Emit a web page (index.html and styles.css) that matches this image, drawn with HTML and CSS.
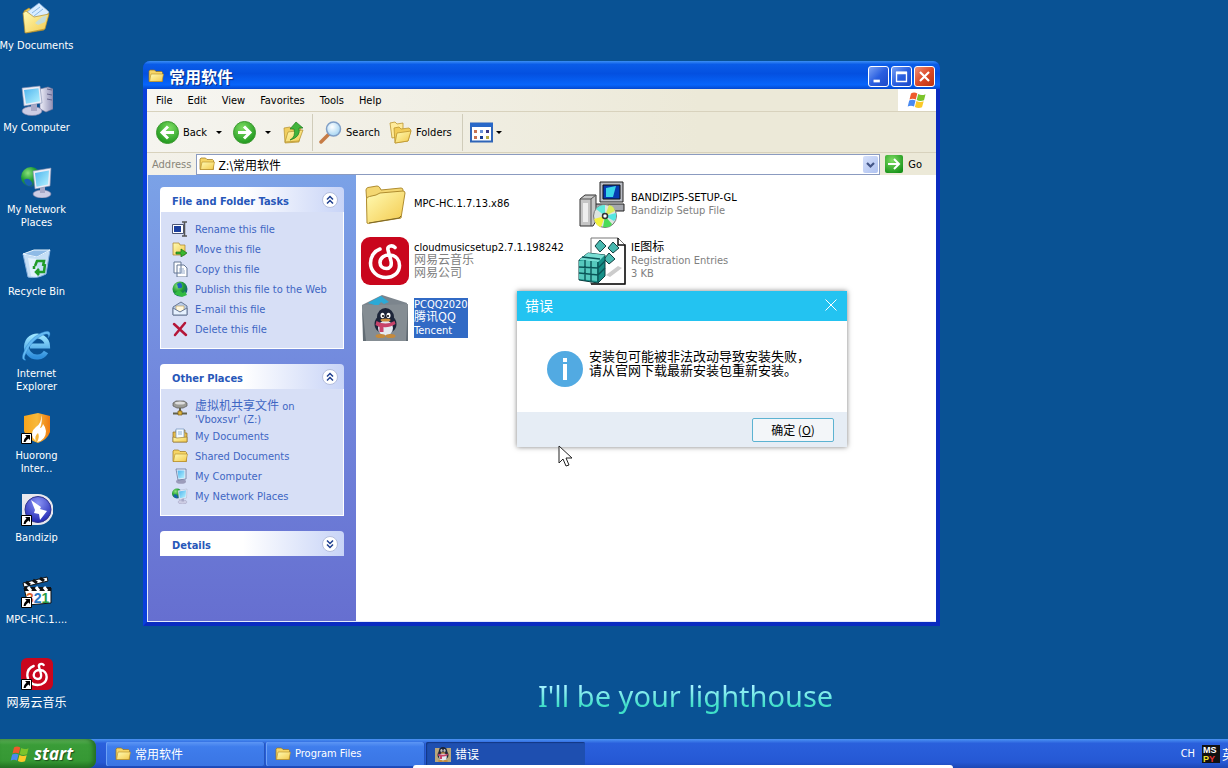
FILE: index.html
```html
<!DOCTYPE html>
<html lang="en">
<head>
    <meta charset="UTF-8">
    <meta name="viewport" content="width=device-width, initial-scale=1.0">
    <title>Desktop</title>
    <link rel="stylesheet" href="styles.css">
</head>
<body>
<!-- shared icons -->
<svg class="sprite" aria-hidden="true">
    <defs>
        <linearGradient id="g-folder" x1="0" y1="0" x2="1" y2="1"><stop offset="0" stop-color="#fffbb4"/><stop offset="1" stop-color="#f3c94c"/></linearGradient>
        <linearGradient id="g-screen" x1="0" y1="0" x2="1" y2="1"><stop offset="0" stop-color="#4fb4ee"/><stop offset="1" stop-color="#b5f3ff"/></linearGradient>
        <linearGradient id="g-case" x1="0" y1="0" x2="1" y2="0"><stop offset="0" stop-color="#f0f0fa"/><stop offset="1" stop-color="#8f8fb4"/></linearGradient>
        <radialGradient id="g-green" cx=".4" cy=".3" r=".8"><stop offset="0" stop-color="#7ddc62"/><stop offset="1" stop-color="#149016"/></radialGradient>
        <radialGradient id="g-globe" cx=".35" cy=".3" r=".8"><stop offset="0" stop-color="#8be27b"/><stop offset=".5" stop-color="#1f9c33"/><stop offset="1" stop-color="#14479c"/></radialGradient>
        <radialGradient id="g-lens" cx=".4" cy=".35" r=".7"><stop offset="0" stop-color="#fff"/><stop offset="1" stop-color="#9fd2f2"/></radialGradient>
        <radialGradient id="g-zip" cx=".5" cy=".25" r=".8"><stop offset="0" stop-color="#8a94f5"/><stop offset="1" stop-color="#1a20ae"/></radialGradient>
        <linearGradient id="g-fire" x1="0" y1="0" x2="1" y2="0"><stop offset="0" stop-color="#f8a51c"/><stop offset=".5" stop-color="#f7b93b"/><stop offset="1" stop-color="#ee7a10"/></linearGradient>
        <linearGradient id="g-ie" x1="0" y1="0" x2="0" y2="1"><stop offset="0" stop-color="#9be4ff"/><stop offset="1" stop-color="#2f8fdc"/></linearGradient>
    </defs>
    <symbol id="folder" viewBox="0 0 16 16">
        <path d="M1 3 2 2h4.500l1.500 1.500h5.500l1 1V13.500H1z" fill="#f6d566" stroke="#9a741a" stroke-width=".7"/>
        <path d="M3 6h12.500l-1.500 7.500H1.500z" fill="url(#g-folder)" stroke="#b48a26" stroke-width=".6"/>
    </symbol>
    <symbol id="bigfolder" viewBox="0 0 48 48">
        <path d="M7 40 5 10q0-2 2-2.500L16 6q2 0 3 2l1 2 20-2q2 0 2 2v4l-3 24z" fill="#f4d772" stroke="#b08d30"/>
        <path d="m6 43-.5-24q0-2 3-2.500L15 15l4-2 23-2q2 0 2 2l-4 25-31 5q-2 1-3 0z" fill="url(#g-folder)" stroke="#b08d30"/>
        <path d="m8 43 30-5 2-2" fill="none" stroke="#7c6727"/>
    </symbol>
    <symbol id="flag" viewBox="0 0 20 18">
        <path d="M4 2.500Q7 .5 10.300 2.500L8.800 8.500Q5.500 6.800 2.500 8.500z" fill="#ee5a2c"/>
        <path d="M11.200 3Q14.500 5 18.500 3.200L17 9.300Q13 11 9.700 9z" fill="#7cc42c"/>
        <path d="M2.200 9.500Q5.500 7.800 8.500 9.500L7 15.500Q4 13.800.7 15.500z" fill="#4a8af0"/>
        <path d="M9.400 10Q13 12 16.700 10.300L15 16.300Q11.500 18 7.900 16z" fill="#fbc928"/>
    </symbol>
    <symbol id="computer" viewBox="0 0 32 32">
        <path d="m19 5 8-2 5 2v20l-7 3-6-3z" fill="url(#g-case)" stroke="#77779a" stroke-width=".6"/>
        <path d="m26 5 5 1m-5 4 5 1m-5 4 5 1" stroke="#66668c"/>
        <ellipse cx="11" cy="27" rx="10" ry="4.500" fill="#cdcde4" stroke="#8080a5" stroke-width=".6"/>
        <path d="M10 20h6v7h-6z" fill="#a9a9c6"/>
        <path d="m1 4 18-2 2 17-18 3z" fill="#ececf6" stroke="#7c8cae" stroke-width=".6"/>
        <path d="m3 6 14.500-1.700 1.500 13-14 2.400z" fill="url(#g-screen)"/>
    </symbol>
    <symbol id="network" viewBox="0 0 32 32">
        <circle cx="10" cy="11" r="10" fill="url(#g-globe)"/>
        <path d="M3 14q4-3 7 1t-2 5q-4-1-5-6z" fill="#195fb5"/>
        <ellipse cx="21" cy="28" rx="9" ry="4" fill="#cdcde4" stroke="#8080a5" stroke-width=".6"/>
        <path d="M19 20h5v7h-5z" fill="#a9a9c6"/>
        <path d="m12 5 18-3-1 18-15 3z" fill="#ececf6" stroke="#7c8cae" stroke-width=".6"/>
        <path d="m14 7 14-2.500-1 14-11.500 2.200z" fill="url(#g-screen)"/>
    </symbol>
    <symbol id="netease" viewBox="0 0 48 48">
        <rect width="48" height="48" rx="9" fill="#c9061d"/>
        <path d="M34 10.500c-3-3-8-1.500-7 2.500l3 11c1 5-1 7.500-4.500 7.500S19 29 19 25.500c0-5 5-8 10-7.500 6 .5 9.500 5 9.500 10.500C38.500 36 32 40.500 25 40.500 16 40.500 9.500 34 9.500 26c0-6.500 4-12 9.500-14" fill="none" stroke="#fff" stroke-width="3.600" stroke-linecap="round"/>
    </symbol>
    <symbol id="shortcut" viewBox="0 0 11 11">
        <path d="M.5.500h10v10H.5z" fill="#fff" stroke="#000"/>
        <path d="M4 2h5v5L7.500 5.500Q5 7 4.500 9H2.500Q2.500 6 5.500 3.500z" fill="#000"/>
    </symbol>
    <symbol id="qq" viewBox="0 0 24 30">
        <ellipse cx="12" cy="16" rx="11" ry="10" fill="#1c2438"/>
        <ellipse cx="12" cy="9" rx="8.500" ry="9" fill="#1c2438"/>
        <ellipse cx="12" cy="20" rx="7.500" ry="7.500" fill="#e6eaf0"/>
        <ellipse cx="9" cy="7.500" rx="2" ry="2.800" fill="#fff"/><ellipse cx="15" cy="7.500" rx="2" ry="2.800" fill="#fff"/>
        <circle cx="9.500" cy="8" r="1"/><circle cx="14.500" cy="8" r="1"/>
        <ellipse cx="12" cy="12" rx="5" ry="1.500" fill="#c98c3a"/>
        <path d="M3 13q9 5 18 0l1 3q-7 4-12 3v5H6v-5l-4-2z" fill="#c7436a"/>
        <ellipse cx="7" cy="28" rx="5" ry="2" fill="#c58a3c"/><ellipse cx="17" cy="28" rx="5" ry="2" fill="#c58a3c"/>
    </symbol>
    <symbol id="arrow" viewBox="0 0 23 23">
        <circle cx="11.500" cy="11.500" r="11" fill="url(#g-green)" stroke="#3f9a32"/>
        <path d="M5 11.500h12m-6-6 6 6-6 6" fill="none" stroke="#fff" stroke-width="3"/>
    </symbol>
    <symbol id="chevrons" viewBox="0 0 18 18">
        <circle cx="9" cy="9" r="7.500" fill="#fff" stroke="#b4bedd"/>
        <path d="m6 8.500 3-3 3 3m-6 4 3-3 3 3" fill="none" stroke="#1f3f8f" stroke-width="1.500"/>
    </symbol>
</svg>

<main class="desktop">
    <nav class="shortcuts" aria-label="Desktop">
        <a href="#" class="shortcut">
            <svg viewBox="0 0 32 32"><path d="m3 9 5-3 4 3 13-2 3 4-5 17-18 3z" fill="#f2ca4d" stroke="#ad8625" stroke-width=".7"/><path d="m6 10 12-9 10 9-10 13z" fill="#d9edff" stroke="#7ba7d8" stroke-width=".7"/><path d="m11 11 8-6m-6 9 9-7" stroke="#88b7e4"/><path d="m2 11 3-2 8 6 15-3-4 15-20 4z" fill="url(#g-folder)" stroke="#b08d30" stroke-width=".7"/><path d="m14 21 7-6 5-2-2 7-7 3z" fill="#b9dcef" opacity=".8"/></svg>
            <span>My&nbsp;Documents</span>
        </a>
        <a href="#" class="shortcut"><svg><use href="#computer"/></svg><span>My Computer</span></a>
        <a href="#" class="shortcut"><svg><use href="#network"/></svg><span>My Network Places</span></a>
        <a href="#" class="shortcut">
            <svg viewBox="0 0 32 32"><path d="m2 6 14 3 13-7-4 24q-9 5-18 3z" fill="#c5dff6" stroke="#89b1de"/><path d="m2 6 11-4 16 0-13 7z" fill="#8fbbe6" stroke="#e9f6ff"/><path d="m7 10 3 18 6 1V11z" fill="#e9f5ff" opacity=".8"/><path d="m14 18 2-5h7l-1 5m2-2-1 8h-7m2 3-3-3 3-3m-5 0v-3" fill="none" stroke="#209b28" stroke-width="2.500"/></svg>
            <span>Recycle Bin</span>
        </a>
        <a href="#" class="shortcut">
            <svg viewBox="0 0 32 32"><path d="M25 22A10.500 10.500 0 1 1 26.500 16H9" fill="none" stroke="url(#g-ie)" stroke-width="5"/><path d="M5 30Q0 31 2 24 7 9 20 3q9-4 9 1 0 2-2 4 2-6-5-3Q11 10 5 23q-3 6 0 7z" fill="#64baf2" stroke="#277fca" stroke-width=".4"/></svg>
            <span>Internet Explorer</span>
        </a>
        <a href="#" class="shortcut">
            <svg viewBox="0 0 32 32"><path d="m3 4 14-3 12 3v16q-3 8-12 11Q5 27 3 19z" fill="url(#g-fire)"/><path d="M20 3q1 8-5 12-6 5-3 11l3 3q-2-5 2-8 2 4-1 9 9-2 9-11-1-5-3-7-1 4-3 4 3-7 1-13z" fill="#fff"/></svg>
            <svg class="badge"><use href="#shortcut"/></svg>
            <span>Huorong Inter...</span>
        </a>
        <a href="#" class="shortcut">
            <svg viewBox="0 0 32 32"><path d="M1 0h16a15 15 0 0 1 0 31H1z" fill="#e8e8ee"/><circle cx="17" cy="15.500" r="13" fill="url(#g-zip)" stroke="#30348e"/><path d="m10 6 10 7-1 2 7 2-7 9-1-6-5-1 1-3z" fill="#fff"/></svg>
            <svg class="badge"><use href="#shortcut"/></svg>
            <span>Bandizip</span>
        </a>
        <a href="#" class="shortcut">
            <svg viewBox="0 0 32 32"><path d="M3 12h27v15L7 29z" fill="#fff" stroke="#111"/><path d="m2 7 24-6 1 4L3 11z" fill="#fff" stroke="#111"/><path d="m5 6 4 3m3-5 4 3m3-5 4 3" stroke="#111" stroke-width="3"/><path d="M3 11h27v4H3z" fill="#111"/><path d="m7 11 3 4m5-4 3 4m5-4 3 4" stroke="#fff" stroke-width="3"/><text x="5" y="27" class="clap"><tspan fill="#e4682c">3</tspan><tspan fill="#2b78c6">2</tspan><tspan fill="#2b9b45">1</tspan></text></svg>
            <svg class="badge"><use href="#shortcut"/></svg>
            <span>MPC-HC.1....</span>
        </a>
        <a href="#" class="shortcut"><svg><use href="#netease"/></svg><svg class="badge"><use href="#shortcut"/></svg><span class="cn">网易云音乐</span></a>
    </nav>

    <section class="window" aria-label="常用软件">
        <header class="titlebar">
            <svg class="i16"><use href="#folder"/></svg>
            <h1>常用软件</h1>
            <button class="winbtn" aria-label="Minimize"><svg viewBox="0 0 21 21"><path d="M5 14h7v3H5z" fill="#fff"/></svg></button>
            <button class="winbtn" aria-label="Maximize"><svg viewBox="0 0 21 21"><path d="M5 6h11v10H5zM5 7h11" fill="none" stroke="#fff" stroke-width="1.500"/><path d="M4.500 5h12v3h-12z" fill="#fff"/></svg></button>
            <button class="winbtn close" aria-label="Close"><svg viewBox="0 0 21 21"><path d="m5.500 5.500 10 10m0-10-10 10" stroke="#fff" stroke-width="2.400"/></svg></button>
        </header>

        <div class="menubar">
            <button>File</button>
            <button>Edit</button>
            <button>View</button>
            <button>Favorites</button>
            <button>Tools</button>
            <button>Help</button>
            <div class="throbber"><svg><use href="#flag"/></svg></div>
        </div>

        <div class="toolbar">
            <div class="tools nav-tools">
                <button><svg class="i23 flip"><use href="#arrow"/></svg>Back</button>
                <button class="caret" aria-label="Back history"></button>
                <button aria-label="Forward"><svg class="i23"><use href="#arrow"/></svg></button>
                <button class="caret" aria-label="Forward history"></button>
                <button aria-label="Up"><svg class="i23" viewBox="0 0 23 23"><path d="m2 7 6-1 2 2 9-1-2 14-14 1z" fill="#f1ce5e" stroke="#b18f2e" stroke-width=".7"/><path d="m3 21 3-10 15-2-4 11z" fill="url(#g-folder)" stroke="#b18f2e" stroke-width=".7"/><path d="M8 19q6-3 4-11H8l6-7 7 6h-4q2 9-9 12z" fill="#42b43c" stroke="#1c7d20" stroke-width=".7"/></svg></button>
            </div>
            <div class="tools">
                <button><svg class="i23" viewBox="0 0 23 23"><path d="m10 13-8 8" stroke="#c67c46" stroke-width="3.500" stroke-linecap="round"/><circle cx="14.500" cy="8" r="7" fill="url(#g-lens)" stroke="#809fc6" stroke-width="1.500"/></svg>Search</button>
                <button><svg class="i23" viewBox="0 0 23 23"><path d="m1 2 5-1 2 2 6-1v13L3 17z" fill="#ffeb9b" stroke="#bc962e" stroke-width=".8"/><path d="m5 7 5-1 2 2 8-1 2 2-3 11-13 2z" fill="#f2cc57" stroke="#bc962e" stroke-width=".8"/><path d="m6 22 2-10 14-2-3 10z" fill="url(#g-folder)" stroke="#bc962e" stroke-width=".8"/></svg>Folders</button>
            </div>
            <div class="tools">
                <button aria-label="Views"><svg class="i23" viewBox="0 0 23 23"><path d="M1 2.500h21v18H1z" fill="#fff" stroke="#2f65b8" stroke-width="2"/><path d="M0 2h23v4H0z" fill="#2868c8"/><path d="M4 9h3v3H4zM4 15h3v3H4z" fill="#c87352"/><path d="M10 9h3v3h-3z" fill="#6a93d9"/><path d="M16 9h3v3h-3z" fill="#3b3b86"/><path d="M10 15h3v3h-3z" fill="#173d93"/><path d="M16 15h3v3h-3z" fill="#b7aa41"/></svg></button>
                <button class="caret" aria-label="Choose view"></button>
            </div>
        </div>

        <div class="addressbar">
            <label for="address">Address</label>
            <div class="combo">
                <svg class="i16"><use href="#folder"/></svg>
                <input type="text" id="address" value="Z:\常用软件">
                <button class="drop" aria-label="Address list"><svg viewBox="0 0 15 17"><path d="m4 7 3.500 3.500L11 7" fill="none" stroke="#435587" stroke-width="2.200"/></svg></button>
            </div>
            <button class="go"><svg viewBox="0 0 18 18"><rect width="18" height="18" rx="2" fill="url(#g-green)"/><path d="M3 9h11m-5-5 5 5-5 5" fill="none" stroke="#fff" stroke-width="2"/></svg>Go</button>
        </div>

        <div class="explorer">
            <aside class="sidebar">
                <section class="panel">
                    <header><h2>File and Folder Tasks</h2><button aria-label="Collapse"><svg><use href="#chevrons"/></svg></button></header>
                    <ul>
                        <li><a href="#"><svg class="i16" viewBox="0 0 16 16"><path d="M.5 3.500h11v9H.5z" fill="#fff" stroke="#4c5676"/><path d="M2 5h7v6H2z" fill="#1b3f9e"/><path d="M10 1h5m-2.500 0v14M10 15h5" stroke="#555" stroke-width="1.500"/></svg>Rename this file</a></li>
                        <li><a href="#"><svg class="i16" viewBox="0 0 16 16"><path d="M1 2h6l1 2h5v10H1z" fill="url(#g-folder)" stroke="#a77f24" stroke-width=".7"/><path d="M4 11h5V8l6 4-6 4v-3H4z" fill="#39b72f" stroke="#176f1a" stroke-width=".7"/></svg>Move this file</a></li>
                        <li><a href="#"><svg class="i16" viewBox="0 0 16 16"><path d="M2 1h7v11H2zM5 4h7l3 3v9H5z" fill="#fff" stroke="#657694"/><path d="M7 8h5m-5 2h6m-6 2h6" stroke="#96abcb"/></svg>Copy this file</a></li>
                        <li><a href="#"><svg class="i16" viewBox="0 0 16 16"><circle cx="8" cy="8" r="7.500" fill="url(#g-globe)"/><path d="m2 13 5-4 4 3 2-2 2 4-5 2z" fill="#32bb43"/><path d="M5 3q4-3 5 1T6 7z" fill="#1f61bd"/></svg>Publish this file to the Web</a></li>
                        <li><a href="#"><svg class="i16" viewBox="0 0 16 16"><path d="m1 6 8-5 6 4v9H1z" fill="#b9cce8" stroke="#697895"/><path d="M4 5h8v6H4z" fill="#fff7dd" stroke="#ba974e" stroke-width=".6"/><path d="m1 7 7 4 7-4v7H1z" fill="#e6f1ff" stroke="#697895"/></svg>E-mail this file</a></li>
                        <li><a href="#"><svg class="i16" viewBox="0 0 16 16"><path d="m2 3 12 11M13 2 3 14" stroke="#b41639" stroke-width="2.500" stroke-linecap="round"/></svg>Delete this file</a></li>
                    </ul>
                </section>

                <section class="panel">
                    <header><h2>Other Places</h2><button aria-label="Collapse"><svg><use href="#chevrons"/></svg></button></header>
                    <ul>
                        <li><a href="#" class="drive"><svg class="i16" viewBox="0 0 16 16"><path d="m1 3 3-2h8l3 2v3l-4 2H5L1 6z" fill="#9c9c96" stroke="#555" stroke-width=".7"/><ellipse cx="8" cy="3" rx="5" ry="1.500" fill="#dedede"/><path d="M8 8v4M1 13.500h14" stroke="#61614b" stroke-width="2"/><path d="M6 11h4v4H6z" fill="#dfb43a" stroke="#77591c" stroke-width=".7"/></svg><span><span class="cn">虚拟机共享文件</span> on<br>'Vboxsvr' (Z:)</span></a></li>
                        <li><a href="#"><svg class="i16" viewBox="0 0 16 16"><path d="M1 4h3V2h9v3h2v9H1z" fill="#e7bb49" stroke="#8e6d22" stroke-width=".7"/><path d="M4 1h8v10H4z" fill="#f5fbff" stroke="#7194bd" stroke-width=".7"/><path d="M6 4h4M6 6h4" stroke="#8cb1d8"/><path d="m1 9 4 1 10-1v5H1z" fill="url(#g-folder)" stroke="#8e6d22" stroke-width=".6"/></svg>My Documents</a></li>
                        <li><a href="#"><svg class="i16"><use href="#folder"/></svg>Shared Documents</a></li>
                        <li><a href="#"><svg class="i16" viewBox="0 0 16 16"><ellipse cx="9" cy="13.500" rx="5" ry="2.300" fill="#9c9cba"/><path d="M4 1h10v10l-8 1z" fill="#e9effa" stroke="#66779c" stroke-width=".8"/><path d="M5.500 2.500h7v7.500l-6 .5z" fill="url(#g-screen)"/></svg>My Computer</a></li>
                        <li><a href="#"><svg class="i16"><use href="#network"/></svg>My Network Places</a></li>
                    </ul>
                </section>

                <section class="panel">
                    <header><h2>Details</h2><button class="down" aria-label="Expand"><svg><use href="#chevrons"/></svg></button></header>
                </section>
            </aside>

            <ul class="files">
                <li class="file"><svg><use href="#bigfolder"/></svg><p>MPC-HC.1.7.13.x86</p></li>
                <li class="file">
                    <svg viewBox="0 0 48 48"><path d="M22 2h23v20H22z" fill="#b9bcc4" stroke="#222"/><path d="M25 5h17v14H25z" fill="#073bb0" stroke="#111"/><path d="m28 8 10-2-3 11h-7z" fill="#39d5e9"/><path d="M15 24h31v7H15z" fill="#a5a8ae" stroke="#222"/><path d="m2 19 5-4h11v26l-3 5H2z" fill="#c6c6c6" stroke="#333"/><path d="M2 19h11v27m0-27 5-4" fill="none" stroke="#555"/><path d="M5 23h5v19H5z" fill="#eee"/><circle cx="27" cy="36" r="11.500" fill="#dce4df" stroke="#777"/><path d="m27 36-9-7q3-4 9-4z" fill="#61e9dc"/><path d="m27 36 11-3q1 5-2 8z" fill="#55e7e2"/><path d="m27 36-11 3q2 7 7 8z" fill="#f3f23d"/><path d="m27 36 4-11q5 1 6 6z" fill="#d9ec5c"/><path d="m27 36-2 11q7 1 9-3z" fill="#4bdc58"/><circle cx="27" cy="36" r="2.500" fill="#fff" stroke="#333" stroke-width="1.500"/></svg>
                    <p>BANDIZIP5-SETUP-GL<br><small>Bandizip Setup File</small></p>
                </li>
                <li class="file"><svg><use href="#netease"/></svg><p>cloudmusicsetup2.7.1.198242<br><small class="cn">网易云音乐<br>网易公司</small></p></li>
                <li class="file">
                    <svg viewBox="0 0 48 48"><path d="M13 1h27l7 7v39H13z" fill="#fff" stroke="#777"/><path d="M40 1v7h7v39H13" fill="none" stroke="#111" stroke-width="1.500"/><path d="m28 38 12-9 4 2-12 9z" fill="#ccc"/><path d="m22 3 6 6-6 6-5-6zm13 2 6 6-6 5-5-5zm-4 11 6 6-6 5-5-5z" fill="#49b9b0" stroke="#123f40"/><path d="m1 23 9-7 17 2v21l-7 7-19-3z" fill="#168f87" stroke="#0b3e40"/><path d="m1 23 19 2 7-7-17-2z" fill="#79ddd3"/><path d="M1 24h18v20L1 42z" fill="#56c9bd"/><path d="M7 23v21m6-20v20m7-19v20M1 30l19 1 7-7M1 36l19 2 7-7M4 20l18 2" fill="none" stroke="#0a5557" stroke-width="1.400"/></svg>
                    <p>IE<span class="cn">图标</span><br><small>Registration Entries<br>3 KB</small></p>
                </li>
                <li class="file selected">
                    <svg viewBox="0 0 48 48"><path d="m1 11 20-10 25 8-1 7H2z" fill="#7c858d"/><path d="m7 9 13-7 8 6-5 2-3-2-3 4z" fill="#2ba9d6"/><path d="M1 11h22l24-1v37H3z" fill="#858d93"/><path d="m1 11 4 36H2zM47 10l-2 37h2z" fill="#626c74"/><use href="#qq" x="12" y="14" width="25" height="30"/></svg>
                    <p>PCQQ2020<br><span class="cn">腾讯QQ</span><br>Tencent</p>
                </li>
            </ul>
        </div>
    </section>

    <section class="dialog" role="dialog" aria-labelledby="dialog-title">
        <header>
            <h2 id="dialog-title">错误</h2>
            <button aria-label="Close"><svg viewBox="0 0 12 12"><path d="m.5.500 11 11m0-11-11 11" stroke="#fff"/></svg></button>
        </header>
        <div class="message">
            <svg viewBox="0 0 36 36"><circle cx="18" cy="18" r="18" fill="#52aae2"/><path d="M16 7h4v4h-4zM16 13h4v16h-4z" fill="#fff"/></svg>
            <p>安装包可能被非法改动导致安装失败，<br>请从官网下载最新安装包重新安装。</p>
        </div>
        <footer><button>确定 (<u>O</u>)</button></footer>
    </section>

    <svg class="cursor" viewBox="0 0 14 22"><path d="M1 1v17l4-4 3 7 3-1-3-7h6z" fill="#fff" stroke="#222"/></svg>

    <p class="lyric">I'll be your lighthouse</p>

    <footer class="taskbar">
        <button class="start"><svg><use href="#flag"/></svg>start</button>
        <button class="task cn"><svg class="i16"><use href="#folder"/></svg>常用软件</button>
        <button class="task"><svg class="i16"><use href="#folder"/></svg>Program Files</button>
        <button class="task cn active"><svg class="i16" viewBox="0 0 16 16"><path d="M0 2h16v14H0z" fill="#b9a77b"/><use href="#qq" x="2" y="1" width="12" height="15"/></svg>错误</button>
        <div class="tray">
            <span>CH</span>
            <svg viewBox="0 0 18 18"><path d="M0 0h18v18H0z" fill="#111"/><text x="1" y="8" fill="#fff">MS</text><text x="1" y="17" fill="#f4e42a">P<tspan fill="#e33">Y</tspan></text></svg>
            <span class="ime">英</span>
        </div>
        <div class="popup-edge"></div>
    </footer>
</main>
</body>
</html>
```
FILE: styles.css
```css
* {
    box-sizing: border-box;
}

body {
    margin: 0;
    font-family: "DejaVu Sans Condensed", "Noto Sans", "Noto Sans CJK SC", sans-serif;
    font-size: 11px;
    line-height: 13px;
    color: #000;
}

h1, h2, p, ul {
    margin: 0;
    padding: 0;
}

ul {
    list-style: none;
}

a {
    color: inherit;
    text-decoration: none;
}

button {
    display: flex;
    align-items: center;
    padding: 0;
    border: none;
    background: none;
    font: inherit;
    color: inherit;
    cursor: pointer;
}

svg {
    display: block;
    flex-shrink: 0;
}

.sprite {
    position: absolute;
    width: 0;
    height: 0;
}

.cn {
    font-family: "Noto Sans CJK SC", sans-serif;
    font-size: 12px;
}

/* keeps mixed lines at the height of the latin text */
.file .cn,
.panel .cn {
    line-height: 0;
}

.i16 {
    width: 16px;
    height: 16px;
}

.i23 {
    width: 23px;
    height: 23px;
}

.flip {
    transform: scaleX(-1);
}

.desktop {
    position: relative;
    display: flex;
    flex-direction: column;
    justify-content: space-between;
    min-height: 100vh;
    background-color: #095294;
    overflow: hidden;
}

/* Desktop icons */
.shortcuts {
    display: flex;
    flex-direction: column;
    width: 73px;
    padding-top: 2px;
}

.shortcut {
    position: relative;
    display: flex;
    flex-direction: column;
    align-items: center;
    gap: 5px;
    height: 82px;
    color: #fff;
    text-align: center;
}

.shortcut:last-child {
    height: 60px;
}

.shortcut svg {
    width: 32px;
    height: 32px;
}

.shortcut .badge {
    position: absolute;
    left: 21px;
    top: 21px;
    width: 11px;
    height: 11px;
}

.clap {
    font: bold 14px "Liberation Sans", sans-serif;
}

/* Explorer window */
.window {
    position: absolute;
    left: 143px;
    top: 61px;
    display: flex;
    flex-direction: column;
    width: 797px;
    height: 565px;
    border: 4px solid #0a3fdc;
    border-top: none;
    border-color: #0a3fdc #0a2cc0 #0a2cc0 #0a3fdc;
    border-radius: 7px 7px 0 0;
    background-color: #0a3fdc;
}

.titlebar {
    display: flex;
    align-items: center;
    gap: 2px;
    height: 28px;
    margin: 0 -4px;
    padding: 2px 5px 0;
    border-radius: 7px 7px 0 0;
    background: linear-gradient(#3b8ef5, #0a5ce8 12%, #0450e0 45%, #0765fb 85%, #0448cf);
}

.titlebar h1 {
    flex: 1;
    padding-left: 3px;
    font: bold 16px "Noto Sans CJK SC", sans-serif;
    line-height: 20px;
    color: #fff;
    text-shadow: 1px 1px 1px #0a2a80;
}

.winbtn {
    width: 21px;
    height: 21px;
    border: 1px solid #fff;
    border-radius: 3px;
    background: linear-gradient(135deg, #7aa2f5, #2a5fe0 50%, #1c49c8);
}

.winbtn.close {
    background: linear-gradient(135deg, #ee9078, #dd4a28 50%, #b93312);
}

.menubar {
    display: flex;
    align-items: center;
    gap: 15px;
    height: 23px;
    padding-left: 9px;
    border-bottom: 1px solid #d8d2bd;
    background: linear-gradient(90deg, #f7f6f2, #ece9d8 70%);
}

.throbber {
    display: flex;
    align-items: center;
    justify-content: center;
    width: 38px;
    height: 22px;
    margin-left: auto;
    background-color: #fff;
}

.throbber svg {
    width: 20px;
    height: 18px;
}

.toolbar {
    display: flex;
    align-items: center;
    height: 41px;
    padding-left: 9px;
    border-bottom: 1px solid #d8d2bd;
    background: linear-gradient(90deg, #f5f4ef, #ece9d8 70%);
}

.tools {
    display: flex;
    align-items: center;
    gap: 9px;
    height: 37px;
    padding: 0 10px 0 6px;
    border-left: 1px solid #d0ccba;
}

.tools:first-child {
    padding: 0 7px 0 0;
    border-left: none;
}

.tools:last-child {
    gap: 3px;
    padding-left: 7px;
}

.tools button {
    gap: 4px;
}

.tools .caret {
    border: 3px solid transparent;
    border-top-color: #000;
    border-bottom: none;
}

.nav-tools .caret + button {
    margin-left: 2px;
}

.addressbar {
    display: flex;
    align-items: center;
    gap: 5px;
    height: 22px;
    padding: 0 14px 0 5px;
    background: linear-gradient(90deg, #f3f1e9, #ece9d8 70%);
}

.addressbar label {
    color: #888579;
}

.combo {
    display: flex;
    align-items: center;
    flex: 1;
    height: 21px;
    padding: 0 1px 0 2px;
    border: 1px solid #8b9bc0;
    background-color: #fff;
}

.combo input {
    flex: 1;
    min-width: 0;
    height: 17px;
    padding: 0 3px;
    border: none;
    outline: none;
    font: 12px "DejaVu Sans Condensed", "Noto Sans CJK SC", sans-serif;
}

.drop {
    width: 15px;
    height: 17px;
    border-radius: 2px;
    background: linear-gradient(135deg, #d5e0fb, #afc2f0);
}

.go {
    gap: 5px;
}

.go svg {
    width: 18px;
    height: 18px;
}

.explorer {
    display: flex;
    flex: 1;
    min-height: 0;
    border-left: 1px solid #e4ebfb;
    border-bottom: 1px solid #e4ebfb;
    background-color: #fff;
}

.sidebar {
    display: flex;
    flex-direction: column;
    gap: 15px;
    width: 208px;
    padding: 12px;
    background: linear-gradient(#7ba2e7, #7186dc 50%, #666fd0);
}

.panel header {
    display: flex;
    align-items: center;
    justify-content: space-between;
    height: 25px;
    padding: 0 5px 0 12px;
    border-radius: 4px 4px 0 0;
    background: linear-gradient(90deg, #fff 45%, #c8d4f7);
}

.panel h2 {
    padding-top: 3px;
    font-size: 11px;
    line-height: 13px;
    color: #2757b9;
}

.panel header svg {
    width: 18px;
    height: 18px;
}

.panel .down {
    transform: scaleY(-1);
}

.panel ul {
    display: flex;
    flex-direction: column;
    gap: 4px;
    padding: 9px 11px 11px;
    border: 1px solid #fff;
    border-top: none;
    background-color: #d7dff6;
    color: #3e66c3;
}

.panel a {
    display: flex;
    align-items: center;
    gap: 7px;
    min-height: 16px;
}

.panel .drive {
    align-items: flex-start;
    padding-top: 2px;
    margin-bottom: -2px;
}

.files {
    flex: 1;
    display: grid;
    grid-template-columns: repeat(auto-fill, 208px);
    grid-auto-rows: 48px;
    align-content: start;
    gap: 9px;
    padding: 5px;
}

.file {
    display: flex;
    align-items: center;
    gap: 5px;
    white-space: nowrap;
}

.file svg {
    width: 48px;
    height: 48px;
}

.file p {
    padding-bottom: 1px;
}

.file small {
    font-size: inherit;
    color: #808080;
}

.file small.cn {
    font-size: 12px;
}

.selected p {
    background-color: #316ac5;
    color: #fff;
}

/* Error dialog */
.dialog {
    position: absolute;
    left: 517px;
    top: 291px;
    width: 330px;
    background-color: #fff;
    box-shadow: 0 0 5px rgba(0, 0, 0, 0.5);
    font-family: "Noto Sans CJK SC", sans-serif;
    font-size: 13px;
}

.dialog header {
    display: flex;
    align-items: center;
    justify-content: space-between;
    height: 30px;
    padding: 0 10px 2px 8px;
    background-color: #23c3f1;
    color: #fff;
}

.dialog h2 {
    font-size: 14px;
    font-weight: normal;
}

.dialog header svg {
    width: 12px;
    height: 12px;
}

.message {
    display: flex;
    align-items: center;
    gap: 6px;
    height: 91px;
    padding: 5px 0 0 30px;
}

.message svg {
    width: 36px;
    height: 36px;
}

.message p {
    padding-bottom: 12px;
    line-height: 14px;
    white-space: nowrap;
}

.dialog footer {
    display: flex;
    justify-content: flex-end;
    padding: 6px 13px 5px;
    background-color: #e6edf5;
}

.dialog footer button {
    justify-content: center;
    width: 82px;
    height: 24px;
    padding-bottom: 2px;
    border: 1px solid #5cb3d2;
    border-radius: 2px;
    background-color: #f3f6f9;
    font-size: 12px;
    white-space: pre;
}

.cursor {
    position: absolute;
    left: 558px;
    top: 445px;
    width: 14px;
    height: 22px;
}

.lyric {
    position: absolute;
    left: 538px;
    top: 676px;
    font-family: "Noto Sans", sans-serif;
    font-size: 29px;
    line-height: 40px;
    white-space: nowrap;
    background: linear-gradient(#a5f2ff 25%, #3fdfc8 75%);
    -webkit-background-clip: text;
    background-clip: text;
    color: transparent;
}

/* Taskbar */
.taskbar {
    position: relative;
    display: flex;
    align-items: center;
    gap: 1px;
    height: 29px;
    background: linear-gradient(#4b93f3, #2a60dc 15%, #2558d4 80%, #1c47b4);
    color: #fff;
}

.start {
    gap: 4px;
    width: 96px;
    height: 29px;
    margin-right: 9px;
    padding-left: 10px;
    border-radius: 0 8px 8px 0;
    background: linear-gradient(#62b45c, #3a9c38 20%, #369834 75%, #247424);
    box-shadow: inset -3px 0 4px #246e24;
    font: italic bold 17px "Open Sans", sans-serif;
    text-shadow: 1px 1px 1px #1b4d1b;
}

.start svg {
    width: 20px;
    height: 18px;
}

.task {
    gap: 4px;
    width: 159px;
    height: 24px;
    padding-left: 9px;
    border-radius: 2px;
    background: linear-gradient(#5c96f5, #3f7dec 20%, #3a75e4);
    box-shadow: inset 1px 0 0 #6ea2f6, inset -1px 0 0 #2456bd;
}

.task.active {
    background: #1e4fb0;
    box-shadow: inset 1px 1px 1px #123784;
}

.tray {
    display: flex;
    align-items: center;
    gap: 7px;
    margin: 0 -7px 0 auto;
}

.tray svg {
    width: 18px;
    height: 18px;
    font: bold 9px "Liberation Sans", sans-serif;
}

.ime {
    margin-left: -5px;
    font-family: "Noto Sans CJK SC", sans-serif;
    font-size: 13px;
}

.popup-edge {
    position: absolute;
    left: 413px;
    bottom: 0;
    width: 540px;
    height: 3px;
    border-radius: 4px 4px 0 0;
    background-color: #fff;
}
```
